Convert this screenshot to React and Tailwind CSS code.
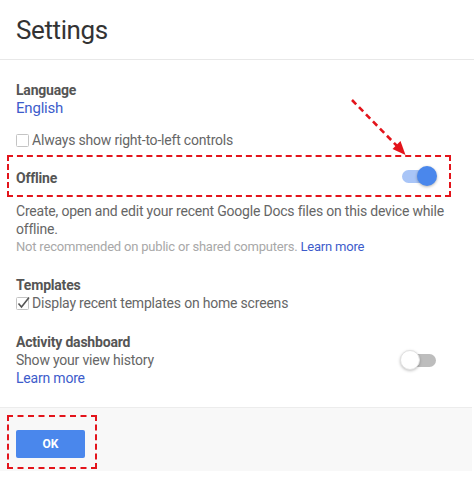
const Toggle = ({ on }) => {
  return (
    <div className="relative w-[36px] h-[20px] shrink-0">
      <div
        className={
          on
            ? "absolute left-[1px] right-[4px] top-[4px] h-[13px] rounded-full bg-[#a9c5f7]"
            : "absolute left-[5px] right-0 top-[4px] h-[13px] rounded-full bg-[#bdbdbd]"
        }
      />
      {on ? (
        <div className="absolute right-0 top-0 w-[20px] h-[20px] rounded-full bg-[#4a87ec] shadow-[0_1px_3px_rgba(0,0,0,0.3)]" />
      ) : (
        <div className="absolute left-0 top-0 w-[20px] h-[20px] rounded-full bg-white border border-[#e2e2e2] shadow-[0_1px_3px_rgba(0,0,0,0.25)]" />
      )}
    </div>
  );
};

const Checkbox = ({ checked }) => {
  return (
    <svg width="14" height="14" viewBox="0 0 14 14" className="shrink-0 overflow-visible">
      <rect x="0.5" y="1.5" width="12" height="12" rx="1" fill="white" stroke="#c4c4c4" />
      {checked && (
        <path d="M2.5 7.5 L5.5 11 L13 1.5" fill="none" stroke="#555" strokeWidth="1.6" />
      )}
    </svg>
  );
};

const Arrow = () => {
  return (
    <svg
      className="absolute left-0 top-0 pointer-events-none"
      width="474"
      height="477"
      viewBox="0 0 474 477"
    >
      <line
        x1="352"
        y1="100"
        x2="397"
        y2="146"
        stroke="#e3141b"
        strokeWidth="2.6"
        strokeDasharray="6 4"
      />
      <polygon points="405.5,155 392.5,149 400.5,141" fill="#e3141b" />
    </svg>
  );
};

export default function App() {
  return (
    <div
      className="relative w-[474px] h-[477px] bg-white overflow-hidden text-[#666]"
      style={{ fontFamily: "Roboto, 'Liberation Sans', sans-serif" }}
    >
      <div className="h-[60px] border-b border-[#e8e8e8] flex items-center px-4">
        <h1 className="text-[26px] leading-[30px] text-[#333] tracking-[-0.4px]">Settings</h1>
      </div>

      <div className="flex flex-col px-4 pt-[21px] text-[14px] leading-[18px] tracking-[-0.2px]">
        <div className="font-bold text-[#555]">Language</div>
        <div className="text-[15px] text-[#3d5ccb]">English</div>

        <div className="mt-[14px] flex items-center gap-[2px]">
          <Checkbox />
          <span>Always show right-to-left controls</span>
        </div>

        <div className="mt-[6px] -ml-[9px] w-[444px] h-[42px] border-2 border-dashed border-[#e3141b] flex items-center justify-between pl-[7px] pr-[12px]">
          <span className="font-bold text-[#555] mt-[3px]">Offline</span>
          <Toggle on />
        </div>

        <div className="mt-[5px]">
          Create, open and edit your recent Google Docs files on this device while offline.
        </div>
        <div className="text-[13px] text-[#a8a8a8]">
          Not recommended on public or shared computers.{" "}
          <span className="text-[#3d5ccb]">Learn more</span>
        </div>

        <div className="mt-[20px] font-bold text-[#555]">Templates</div>
        <div className="flex items-center gap-[2px]">
          <Checkbox checked />
          <span>Display recent templates on home screens</span>
        </div>

        <div className="mt-[21px] w-[420px] flex items-center justify-between">
          <div className="flex flex-col">
            <div className="font-bold text-[#555]">Activity dashboard</div>
            <div>Show your view history</div>
            <div className="text-[#3d5ccb]">Learn more</div>
          </div>
          <Toggle />
        </div>
      </div>

      <div className="mt-[20px] w-[472px] h-[64px] bg-[#f8f8f8] border-t border-[#ececec]">
        <div className="ml-[7px] mt-[7px] w-fit border-2 border-dashed border-[#e3141b] pl-[7px] pr-[10px] pt-[13px] pb-[9px]">
          <button className="w-[69px] h-[28px] rounded-[2px] bg-[#4a87ec] text-white text-[12px] font-bold">
            OK
          </button>
        </div>
      </div>

      <Arrow />
    </div>
  );
}
